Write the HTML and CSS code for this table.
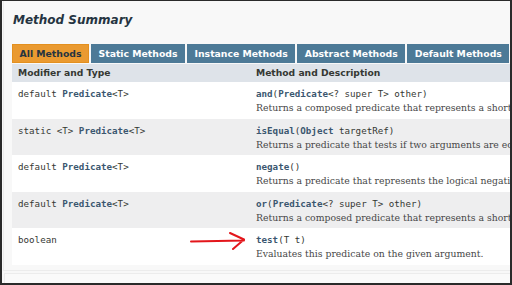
FILE: index.html
```html
<!DOCTYPE html>
<html>
<head>
<meta charset="utf-8">
<link rel="stylesheet" href="styles.css">
</head>
<body>
<div class="frame">
  <div class="block">
    <h3 class="title">Method Summary</h3>
    <div class="tabs">
      <span class="tab active">All Methods</span>
      <span class="tab">Static Methods</span>
      <span class="tab">Instance Methods</span>
      <span class="tab">Abstract Methods</span>
      <span class="tab">Default Methods</span>
    </div>
    <div class="table">
      <div class="row head">
        <div class="c1">Modifier and Type</div>
        <div class="c2">Method and Description</div>
      </div>
      <div class="row">
        <div class="c1 code">default <span class="lnk">Predicate</span>&lt;T&gt;</div>
        <div class="c2"><div class="code"><b class="m">and</b>(<span class="lnk">Predicate</span>&lt;? super T&gt; other)</div><div class="desc">Returns a composed predicate that represents a short-circuiting logical AND of this predicate and another.</div></div>
      </div>
      <div class="row alt">
        <div class="c1 code">static &lt;T&gt; <span class="lnk">Predicate</span>&lt;T&gt;</div>
        <div class="c2"><div class="code"><b class="m">isEqual</b>(<span class="lnk">Object</span> targetRef)</div><div class="desc">Returns a predicate that tests if two arguments are equal according to Objects.equals(Object, Object).</div></div>
      </div>
      <div class="row">
        <div class="c1 code">default <span class="lnk">Predicate</span>&lt;T&gt;</div>
        <div class="c2"><div class="code"><b class="m">negate</b>()</div><div class="desc">Returns a predicate that represents the logical negation of this predicate.</div></div>
      </div>
      <div class="row alt">
        <div class="c1 code">default <span class="lnk">Predicate</span>&lt;T&gt;</div>
        <div class="c2"><div class="code"><b class="m">or</b>(<span class="lnk">Predicate</span>&lt;? super T&gt; other)</div><div class="desc">Returns a composed predicate that represents a short-circuiting logical OR of this predicate and another.</div></div>
      </div>
      <div class="row">
        <div class="c1 code">boolean</div>
        <div class="c2 mark"><div class="code"><b class="m">test</b>(T t)</div><div class="desc">Evaluates this predicate on the given argument.</div>
          <svg class="arrow" width="60" height="22" viewBox="0 0 60 22"><path d="M1 11.5 L54 10.5 M40 3 L54 9.5 L43 19" fill="none" stroke="#e3161b" stroke-width="2" stroke-linecap="round" stroke-linejoin="round"/></svg>
        </div>
      </div>
    </div>
  </div>
  <div class="block2"></div>
</div>
</body>
</html>
```
FILE: styles.css
```css
html, body {
  margin: 0;
  padding: 0;
  background: #f8f8f8;
}
.frame {
  width: 512px;
  height: 285px;
  box-sizing: border-box;
  border-top: 1px solid #2a2a2a;
  border-left: 2px solid #2a2a2a;
  border-right: 2px solid #2a2a2a;
  border-bottom: 2px solid #2a2a2a;
  background: #f8f8f8;
  overflow: hidden;
  display: flex;
  flex-direction: column;
}
.block {
  margin-left: 1px;
  border: 1px solid #ececec;
  border-top: none;
  border-right: none;
  padding: 0 0 5px 8px;
  background: #f8f8f8;
}
.title {
  margin: 0;
  padding: 11px 0 0 1px;
  height: 19px;
  font-family: "DejaVu Sans", sans-serif;
  font-style: italic;
  font-weight: bold;
  font-size: 12px;
  line-height: 16px;
  color: #253441;
}
.tabs {
  margin-top: 13px;
  display: flex;
  gap: 2px;
  white-space: nowrap;
}
.tab {
  height: 19px;
  box-sizing: border-box;
  padding: 0 7.5px;
  background: #4d7a97;
  color: #ffffff;
  font-family: "DejaVu Sans", sans-serif;
  font-weight: bold;
  font-size: 9.3px;
  line-height: 19px;
  flex: none;
}
.tab.active {
  background: #ea9a30;
  color: #253441;
  box-shadow: inset 0 0 0 1px #e3901f;
}
.table {
  width: 600px;
  margin-top: 1px;
}
.row {
  display: flex;
  height: 36.5px;
  background: #ffffff;
  color: #353833;
}
.row.alt {
  background: #eeeeef;
}
.row.head {
  height: 18px;
  background: #dee3e9;
  font-family: "DejaVu Sans", sans-serif;
  font-weight: bold;
  font-size: 9.2px;
  line-height: 18px;
}
.c1 {
  width: 238px;
  box-sizing: border-box;
  padding-left: 6px;
  flex: none;
}
.c2 {
  flex: 1;
  padding-left: 6px;
  white-space: nowrap;
}
.row:not(.head) .c1, .row:not(.head) .c2 {
  padding-top: 6px;
}
.code {
  font-family: "DejaVu Sans Mono", monospace;
  font-size: 9.2px;
  line-height: 11px;
  color: #353833;
}
.lnk {
  color: #3b5770;
  font-weight: bold;
}
.m {
  color: #3b5770;
  font-weight: bold;
}
.desc {
  margin-top: 3px;
  font-family: "DejaVu Serif", serif;
  font-size: 9.3px;
  line-height: 12px;
  color: #474747;
}
.mark {
  position: relative;
}
.arrow {
  position: absolute;
  left: -60px;
  top: 2px;
}
.block2 {
  margin-top: 2px;
  margin-left: 2px;
  flex: 1;
  border-left: 1px solid #ececec;
  border-top: 1px solid #ececec;
  background: #fafafa;
}
```
